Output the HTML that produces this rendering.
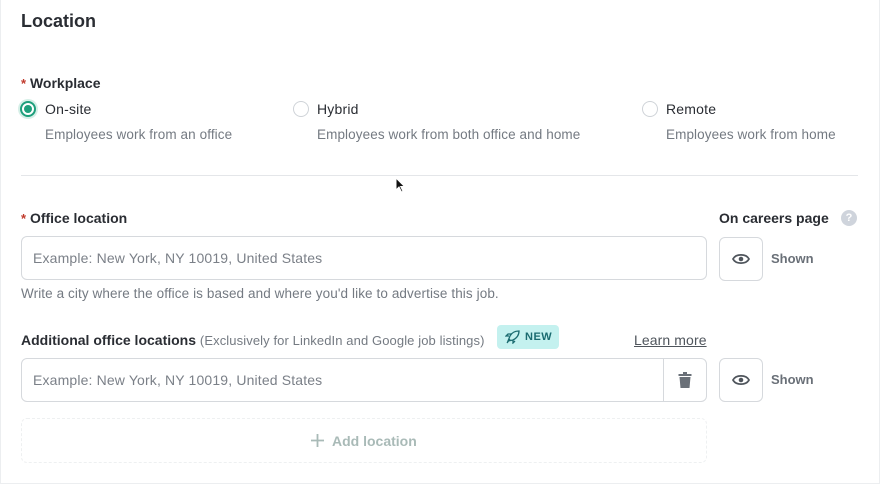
<!DOCTYPE html>
<html><head><style>
*{box-sizing:border-box;margin:0;padding:0}
body{width:880px;height:484px;background:#fff;font-family:"Liberation Sans",sans-serif;color:#2a2d33;position:relative;overflow:hidden}
.a{position:absolute;white-space:nowrap}
.frame{position:absolute;left:0;top:0;width:880px;height:484px;border:1px solid #eceef0;border-top:none}
.radio{position:absolute;width:16px;height:16px;border-radius:50%;border:1.5px solid #cfd3d8;background:#fff}
.desc{font-size:13.5px;color:#747a82;letter-spacing:0.1px}
.lbl{font-size:14px;font-weight:bold;color:#2a2d33}
.star{color:#c0392b;font-size:13px}
.input{position:absolute;border:1px solid #d6d9dd;border-radius:6px;background:#fff}
.ph{font-size:14px;color:#7b8088;letter-spacing:0.15px}
.eyebox{position:absolute;width:44px;height:44px;border:1px solid #d6d9dd;border-radius:6px;display:flex;align-items:center;justify-content:center}
.shown{font-size:13px;color:#6a7078;font-weight:bold}
</style></head><body>
<div class="frame"></div>
<div class="a" style="left:21px;top:11px;font-size:18px;font-weight:bold;color:#2a2d33">Location</div>

<div class="a" style="left:21px;top:75px;font-size:14px;font-weight:bold"><span class="star">*</span> Workplace</div>
<div class="radio" style="left:20px;top:101px;border:2px solid #1e9f7c;box-shadow:0 0 0 2px #d5efe7"><div style="position:absolute;left:2px;top:2px;width:8px;height:8px;border-radius:50%;background:#1e9f7c"></div></div>
<div class="a" style="left:45px;top:101px;font-size:14px;letter-spacing:0.2px">On-site</div>
<div class="a desc" style="left:45px;top:127px">Employees work from an office</div>
<div class="radio" style="left:293px;top:101px"></div>
<div class="a" style="left:317px;top:101px;font-size:14px;letter-spacing:0.2px">Hybrid</div>
<div class="a desc" style="left:317px;top:127px">Employees work from both office and home</div>
<div class="radio" style="left:642px;top:101px"></div>
<div class="a" style="left:666px;top:101px;font-size:14px;letter-spacing:0.2px">Remote</div>
<div class="a desc" style="left:666px;top:127px">Employees work from home</div>

<div class="a" style="left:21px;top:175px;width:837px;height:1px;background:#e4e6e9"></div>
<svg class="a" style="left:395px;top:177px" width="12" height="17" viewBox="0 0 12 17"><path d="M1 1 L1 13 L4 10 L6.5 15 L8 14.3 L5.7 9.5 L9.5 9.5 Z" fill="#111" stroke="#fff" stroke-width="1"/></svg>

<div class="a lbl" style="left:21px;top:210px"><span class="star">*</span> Office location</div>
<div class="a lbl" style="left:719px;top:210px">On careers page</div>
<div class="a" style="left:841px;top:210px;width:16px;height:16px;border-radius:50%;background:#cfd4dc;color:#fff;font-size:11px;font-weight:bold;text-align:center;line-height:16px">?</div>

<div class="input" style="left:21px;top:236px;width:686px;height:44px"></div>
<div class="a ph" style="left:33px;top:250px">Example: New York, NY 10019, United States</div>
<div class="eyebox" style="left:719px;top:237px"><svg width="18" height="12" viewBox="0 0 18 12"><path d="M1 6 C4 0.5 14 0.5 17 6 C14 11.5 4 11.5 1 6 Z" fill="none" stroke="#4f555c" stroke-width="1.8"/><circle cx="9" cy="6" r="2.3" fill="#4f555c"/></svg></div>
<div class="a shown" style="left:771px;top:251px">Shown</div>
<div class="a desc" style="left:21px;top:286px">Write a city where the office is based and where you'd like to advertise this job.</div>

<div class="a" style="left:21px;top:332px;font-size:14px"><b>Additional office locations</b> <span style="font-size:13px;color:#747a82;letter-spacing:0.1px">(Exclusively for LinkedIn and Google job listings)</span></div>
<div class="a" style="left:497px;top:325px;width:62px;height:24px;border-radius:4px;background:#c4f1ef;color:#1a6b70;font-size:11px;font-weight:bold;line-height:24px;padding-left:28px;letter-spacing:0.5px">NEW</div>
<svg class="a" style="left:505px;top:330px" width="15" height="14" viewBox="0 0 15 14"><path d="M3 11 L5 6 C7 2 10 1 14 1 C14 5 12 8 8 10 Z M5 9 L2 13 M4 6 L1 6 L3 4 L6 4 M8 10 L8 13 L10 11" fill="none" stroke="#1a6b70" stroke-width="1.3"/></svg>
<div class="a" style="left:634px;top:332px;font-size:14px;color:#4f555c;text-decoration:underline;letter-spacing:0.1px">Learn more</div>

<div class="input" style="left:21px;top:358px;width:686px;height:44px"></div>
<div class="a" style="left:663px;top:359px;width:1px;height:42px;background:#d6d9dd"></div>
<div class="a ph" style="left:33px;top:372px">Example: New York, NY 10019, United States</div>
<svg class="a" style="left:678px;top:372px" width="14" height="16" viewBox="0 0 14 16"><rect x="0.5" y="2" width="13" height="2" fill="#6a7078"/><rect x="5" y="0" width="4" height="2" fill="#6a7078"/><path d="M1.5 5 H12.5 L11.5 16 H2.5 Z" fill="#6a7078"/></svg>
<div class="eyebox" style="left:719px;top:358px"><svg width="18" height="12" viewBox="0 0 18 12"><path d="M1 6 C4 0.5 14 0.5 17 6 C14 11.5 4 11.5 1 6 Z" fill="none" stroke="#4f555c" stroke-width="1.8"/><circle cx="9" cy="6" r="2.3" fill="#4f555c"/></svg></div>
<div class="a shown" style="left:771px;top:372px">Shown</div>

<div class="a" style="left:21px;top:418px;width:686px;height:45px;border:1px dashed #eef0f1;border-radius:6px"></div>
<svg class="a" style="left:311px;top:434px" width="13" height="13" viewBox="0 0 13 13"><path d="M6.5 0 V13 M0 6.5 H13" stroke="#a9bab7" stroke-width="1.8"/></svg>
<div class="a" style="left:332px;top:433px;font-size:14px;color:#a9bab7;font-weight:bold">Add location</div>
</body></html>
